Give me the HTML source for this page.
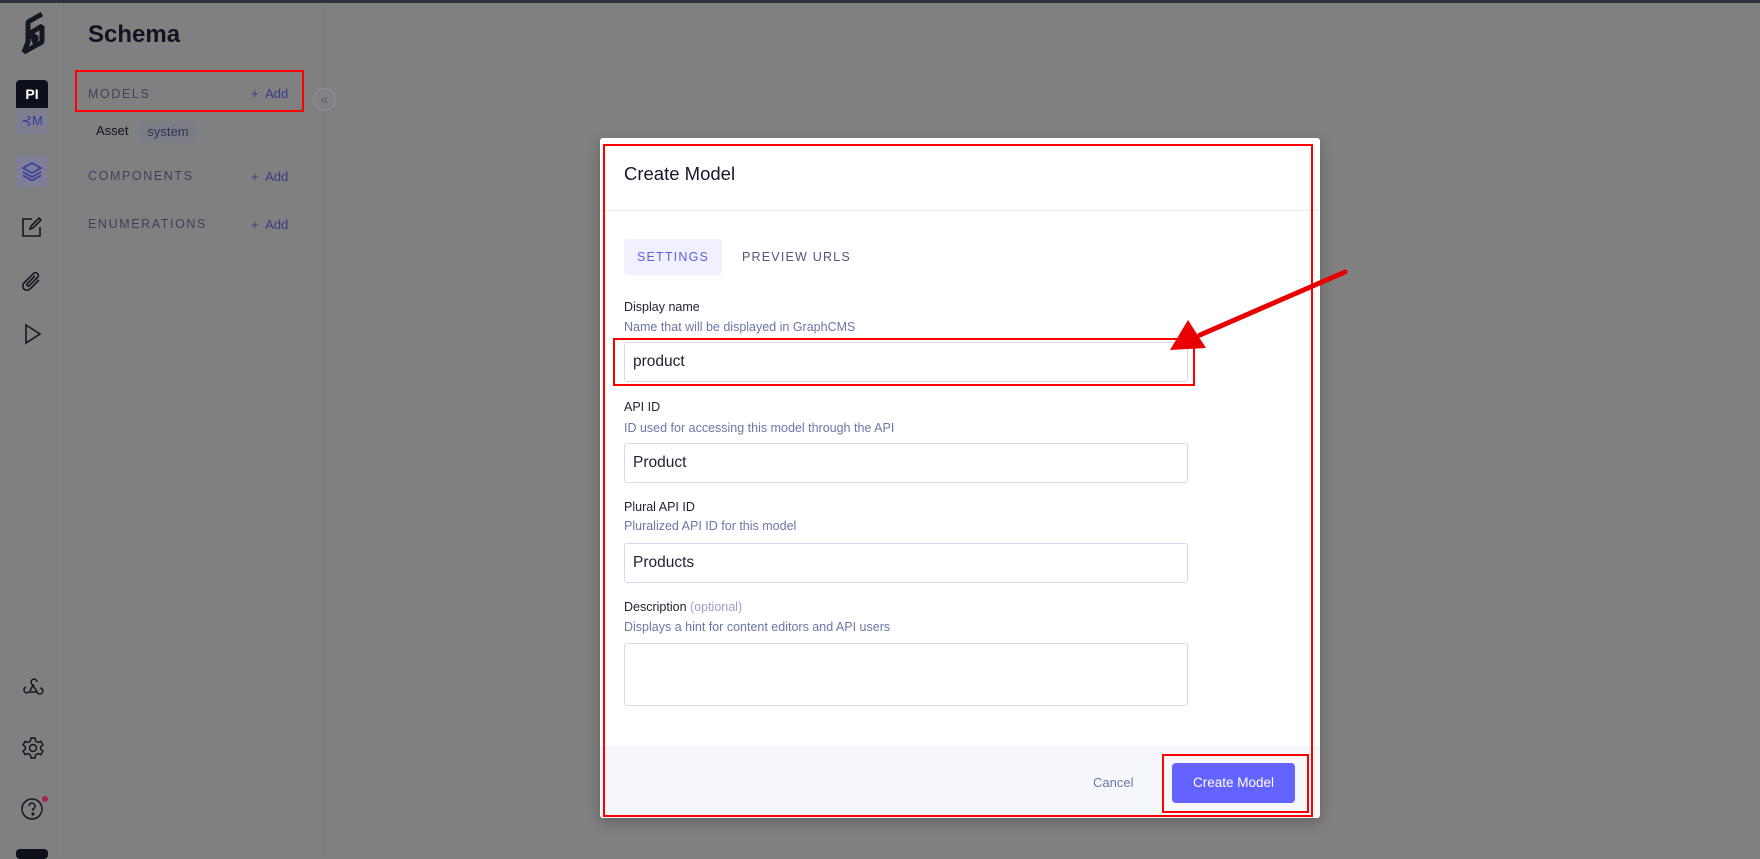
<!DOCTYPE html>
<html><head><meta charset="utf-8"><style>
*{box-sizing:border-box;margin:0;padding:0}
body{width:1760px;height:856px;background:#808080;font-family:"Liberation Sans",sans-serif;position:relative;overflow:hidden}
.abs{position:absolute}
.topbar{left:0;top:0;width:1760px;height:3px;background:#2c3040}
.rail{left:0;top:3px;width:64px;height:853px;border-right:1px solid #777a80}
.side{left:64px;top:3px;width:260px;height:853px;border-right:1px solid #777a80}
.sec{font-size:12.5px;letter-spacing:1.6px;color:#3e4258}
.add{font-size:13px;color:#3a3a8a}
.modal{left:600px;top:138px;width:720px;height:680px;background:#fff;border-radius:3px;box-shadow:0 4px 14px rgba(0,0,0,.25)}
.lbl{font-size:12.5px;color:#1e2130;left:24px}
.hint{font-size:12.5px;color:#6c76a8;left:24px}
.inp{left:24px;width:564px;height:40px;border:1px solid #d5d9ee;border-radius:3px;font-size:15.5px;color:#1e2130;padding:10px 0 0 8px}
.red{border:2px solid #f00}
</style></head><body>
<div class="abs topbar"></div>
<div class="abs rail"></div>
<div class="abs side"></div>
<svg class="abs" style="left:20px;top:12px" width="26" height="42" viewBox="0 0 26 42"><path d="M22 2 L8 10 V30 L4 40 L22 30 V14 L12 20 V26 L16 24 V28 L12 30" fill="none" stroke="#151820" stroke-width="5" stroke-linejoin="bevel"/></svg>
<div class="abs" style="left:16px;top:80px;width:32px;height:28px;background:#0d0f1c;border-radius:4px 4px 0 0;color:#fff;font-weight:bold;font-size:14px;text-align:center;line-height:28px">PI</div>
<div class="abs" style="left:16px;top:108px;width:32px;height:26px;background:#7d7e90;border-radius:0 0 4px 4px;color:#3a3aa0;font-size:13px;text-align:center;line-height:26px">⊰M</div>
<div class="abs" style="left:16px;top:155px;width:32px;height:32px;background:#7e7e96;border-radius:4px"></div>
<svg class="abs" style="left:20px;top:159px" width="24" height="24" viewBox="0 0 24 24" fill="none" stroke="#3a3aa0" stroke-width="1.6"><path d="M12 4 L21 9 L12 14 L3 9Z M3 13 L12 18 L21 13 M3 16.5 L12 21.5 L21 16.5"/></svg>
<svg class="abs" style="left:21px;top:216px" width="22" height="22" viewBox="0 0 22 22" fill="none" stroke="#15171f" stroke-width="1.6"><path d="M11 3H2V20H19V11 M9 13 L10 10 L18 2 L20 4 L12 12Z"/></svg>
<svg class="abs" style="left:21px;top:270px" width="22" height="24" viewBox="0 0 22 24" fill="none" stroke="#15171f" stroke-width="1.6"><path d="M18 10 L9 19 A4 4 0 0 1 3 13 L13 3 A3 3 0 0 1 17 7 L8 16 A1.5 1.5 0 0 1 6 14 L14 6"/></svg>
<svg class="abs" style="left:24px;top:323px" width="18" height="22" viewBox="0 0 18 22" fill="none" stroke="#15171f" stroke-width="1.6"><path d="M2 2 L16 11 L2 20Z"/></svg>
<svg class="abs" style="left:21px;top:677px" width="24" height="24" viewBox="0 0 24 24" fill="none" stroke="#15171f" stroke-width="1.5"><path d="M9 14 L12 8 A3 3 0 1 1 16 5 M15 15 H8 A3 3 0 1 1 5 10 M12 8 L16 15 A3 3 0 1 0 19 11"/></svg>
<svg class="abs" style="left:21px;top:736px" width="24" height="24" viewBox="0 0 24 24" fill="none" stroke="#15171f" stroke-width="1.5"><circle cx="12" cy="12" r="3.5"/><path d="M10 2h4l.6 3 2.4 1.4 2.9-1 2 3.4-2.3 2v2.4l2.3 2-2 3.4-2.9-1L14.6 19 14 22h-4l-.6-3-2.4-1.4-2.9 1-2-3.4 2.3-2V10.8L2.1 8.8l2-3.4 2.9 1L9.4 5Z"/></svg>
<svg class="abs" style="left:20px;top:795px" width="30" height="26" viewBox="0 0 30 26" fill="none" stroke="#15171f" stroke-width="1.5"><circle cx="12" cy="14" r="10"/><path d="M9 11 A3 3 0 1 1 13 14 V16"/><circle cx="13" cy="19" r=".8" fill="#15171f"/><circle cx="25" cy="4" r="3" fill="#a3264a" stroke="none"/></svg>
<div class="abs" style="left:16px;top:849px;width:32px;height:10px;background:#0d0f1c;border-radius:4px"></div>
<div class="abs" style="left:88px;top:21px;font-size:24px;font-weight:bold;color:#111320">Schema</div>
<div class="abs sec" style="left:88px;top:87px">MODELS</div>
<div class="abs add" style="left:251px;top:86px">+&nbsp; Add</div>
<div class="abs red" style="left:75px;top:70px;width:229px;height:42px"></div>
<div class="abs" style="left:96px;top:123px;font-size:13px;color:#111320">Asset</div>
<div class="abs" style="left:139px;top:122px;width:58px;height:20px;background:#7a7c86;border-radius:3px;font-size:13px;color:#333650;text-align:center;line-height:20px">system</div>
<div class="abs sec" style="left:88px;top:169px">COMPONENTS</div>
<div class="abs add" style="left:251px;top:169px">+&nbsp; Add</div>
<div class="abs sec" style="left:88px;top:217px">ENUMERATIONS</div>
<div class="abs add" style="left:251px;top:217px">+&nbsp; Add</div>
<div class="abs" style="left:313px;top:88px;width:23px;height:23px;border:1px solid #8e90a0;border-radius:50%;color:#555a80;font-size:14px;text-align:center;line-height:20px;background:#828282">«</div>
<div class="abs modal">
 <div class="abs" style="left:24px;top:25px;font-size:18.5px;color:#14172a">Create Model</div>
 <div class="abs" style="left:0;top:72px;width:720px;height:1px;background:#eceef5"></div>
 <div class="abs" style="left:24px;top:101px;width:98px;height:36px;background:#f0f0fe;border-radius:4px;color:#6060e0;font-size:12.5px;letter-spacing:1.2px;text-align:center;line-height:36px">SETTINGS</div>
 <div class="abs" style="left:142px;top:101px;font-size:12.5px;letter-spacing:1.2px;color:#50587a;line-height:36px">PREVIEW URLS</div>
 <div class="abs lbl" style="top:162px">Display name</div>
 <div class="abs hint" style="top:182px">Name that will be displayed in GraphCMS</div>
 <div class="abs inp" style="top:204px">product</div>
 <div class="abs lbl" style="top:262px">API ID</div>
 <div class="abs hint" style="top:283px">ID used for accessing this model through the API</div>
 <div class="abs inp" style="top:305px">Product</div>
 <div class="abs lbl" style="top:362px">Plural API ID</div>
 <div class="abs hint" style="top:381px">Pluralized API ID for this model</div>
 <div class="abs inp" style="top:405px">Products</div>
 <div class="abs lbl" style="top:462px">Description <span style="color:#9aa0c8">(optional)</span></div>
 <div class="abs hint" style="top:482px">Displays a hint for content editors and API users</div>
 <div class="abs inp" style="top:505px;height:63px"></div>
 <div class="abs" style="left:0;top:608px;width:720px;height:72px;background:#f6f7fa;border-radius:0 0 3px 3px"></div>
 <div class="abs" style="left:493px;top:637px;font-size:13px;color:#6c76a8">Cancel</div>
 <div class="abs" style="left:572px;top:625px;width:123px;height:40px;background:#6563ff;border-radius:4px;color:#fff;font-size:13.5px;text-align:center;line-height:40px">Create Model</div>
</div>
<div class="abs red" style="left:603px;top:144px;width:710px;height:673px"></div>
<div class="abs red" style="left:613px;top:338px;width:582px;height:48px"></div>
<div class="abs red" style="left:1162px;top:754px;width:147px;height:59px"></div>
<svg class="abs" style="left:0;top:0" width="1760" height="856"><line x1="1345" y1="272" x2="1200" y2="335" stroke="#e80000" stroke-width="5" stroke-linecap="round"/><path d="M1170 350 L1188 320 L1206 348Z" fill="#e80000"/></svg>
</body></html>
